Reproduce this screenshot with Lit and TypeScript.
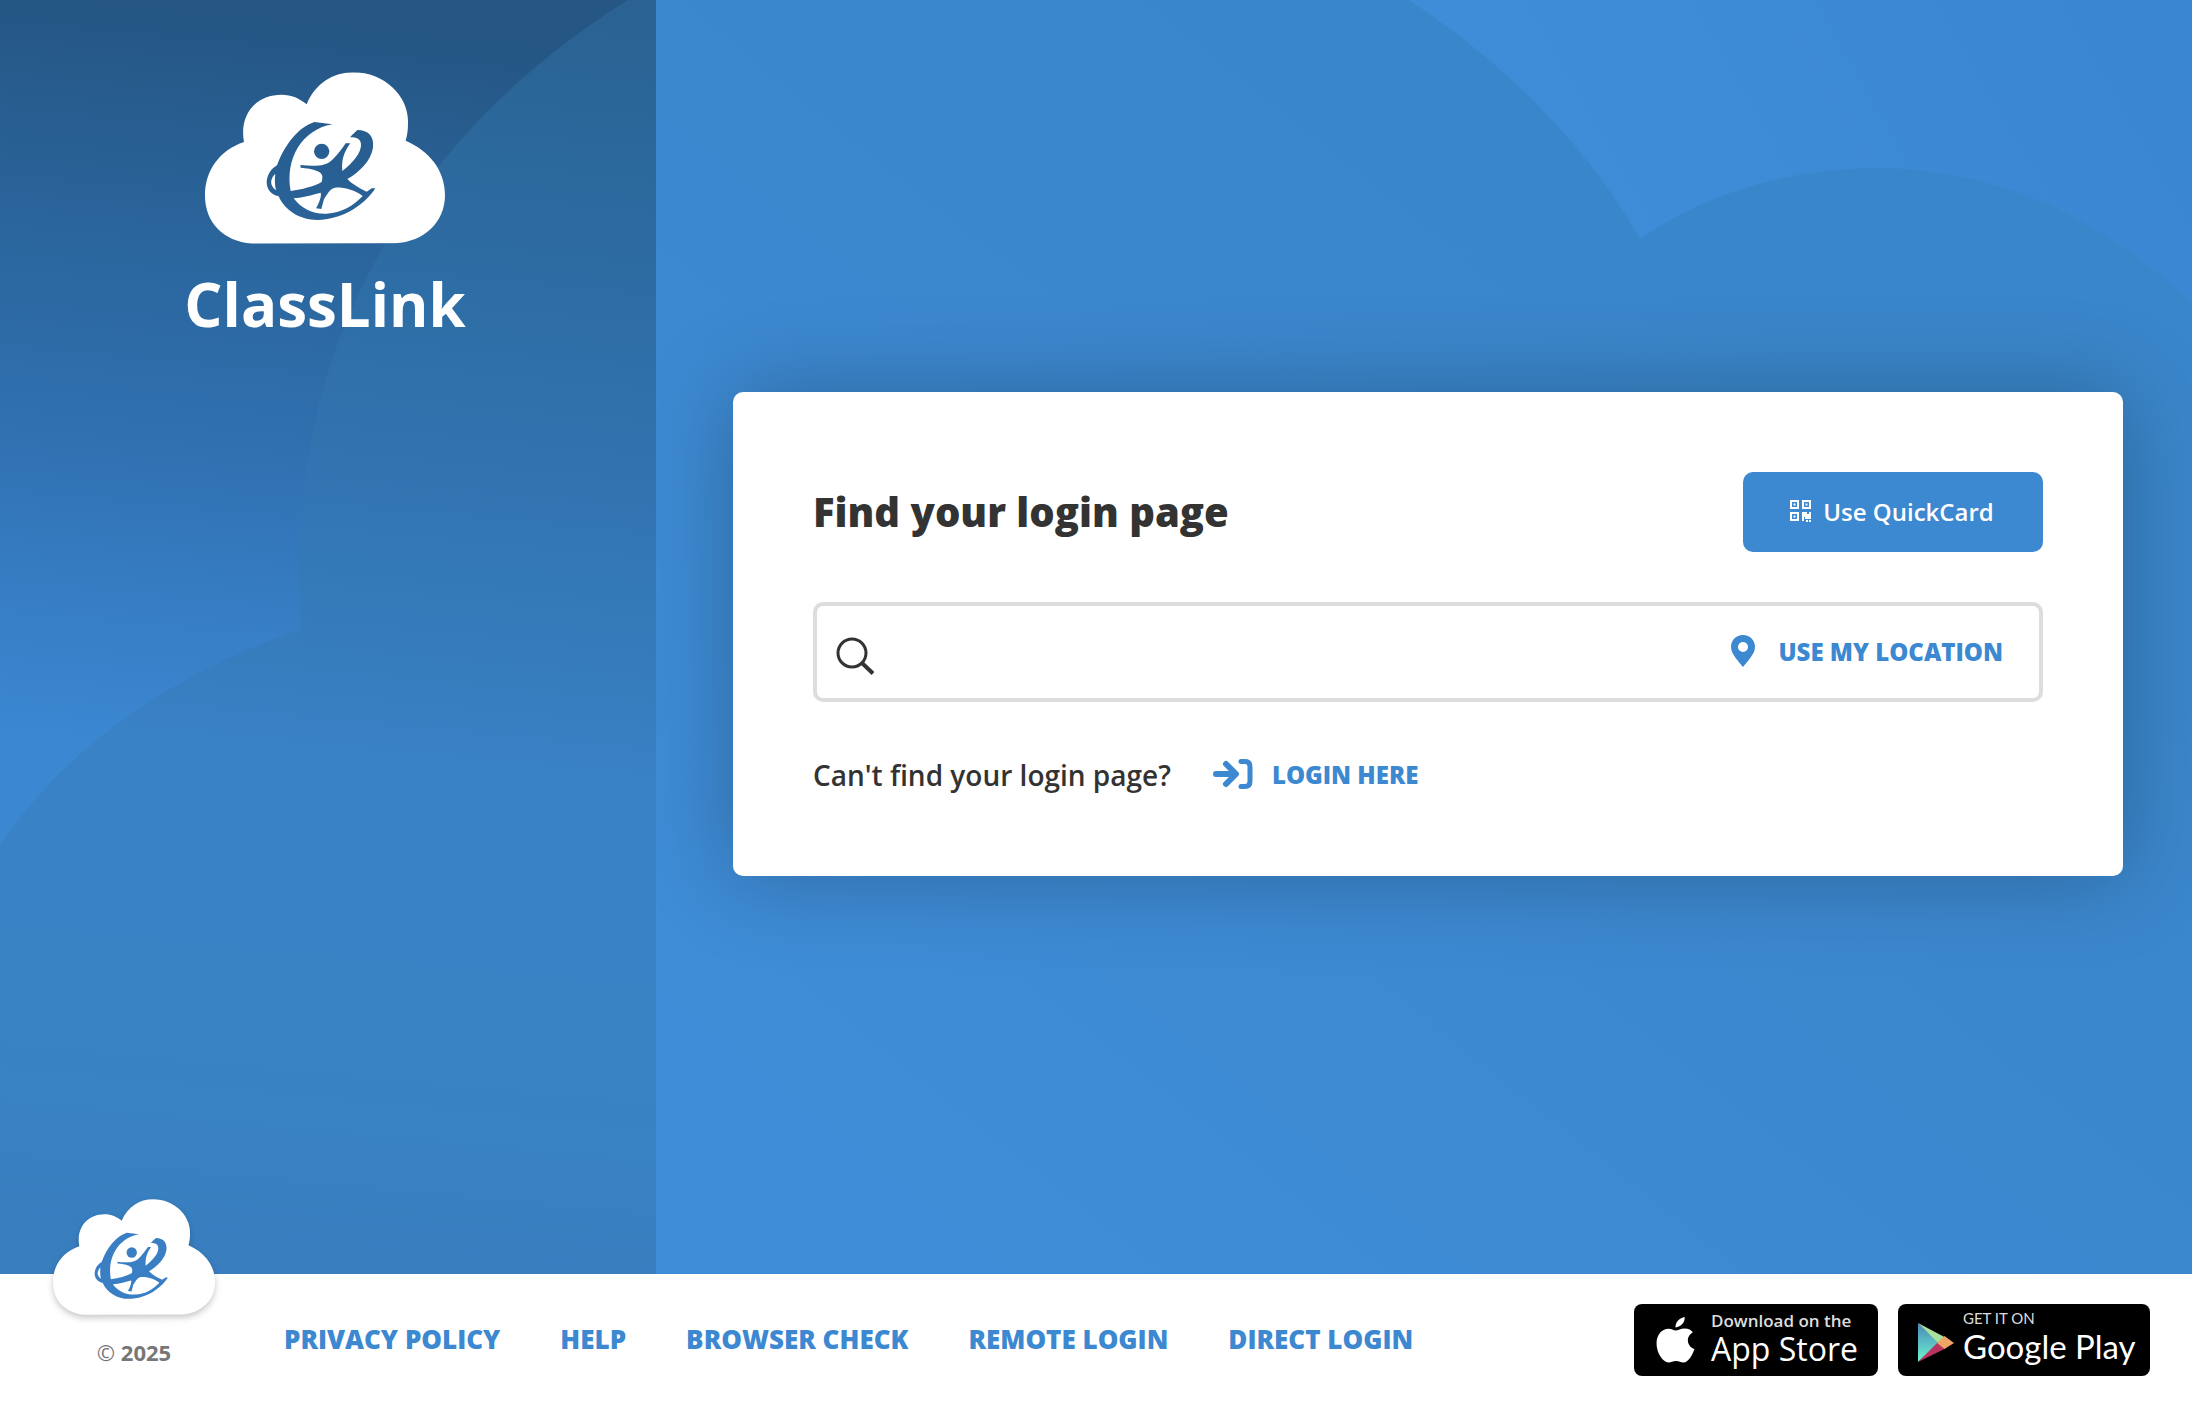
import { LitElement, html, css, svg } from "lit";
import { customElement } from "lit/decorators.js";

const cloudPath =
  "M140 514 C55 506 0 450 0 370 C0 290 48 232 117 209 C102 130 150 67 230 67 C259 67 284 78 305 96 C332 32 385 0 445 0 C540 0 612 74 609 151 C609 173 607 188 602 205 C672 235 720 293 720 368 C720 450 658 508 570 513 Z";

const figure = svg`
  <path fill-rule="evenodd" d="M328 149 L382 156 C290 172 240 260 257 356 C292 351 325 343 350 329 C356 308 350 302 336 296 C322 290 305 287 287 286 L286 278 C330 283 362 282 382 262 C400 246 410 230 422 213 L436 213 C416 240 409 265 412 296 C445 270 468 242 468 218 C468 200 455 195 435 195 L442 187 L457 173 C490 173 508 192 504 226 C498 265 465 298 427 320 C440 334 460 346 485 358 L500 348 L511 348 C485 390 420 442 337 443 C285 443 240 415 221 372 C196 366 185 350 185 328 C187 306 198 290 216 279 C240 215 280 165 328 149 Z M211 304 C195 320 193 338 213 354 C209 337 209 320 211 304 Z M266 378 C290 410 325 426 365 424 C410 422 445 400 473 371 C445 350 410 344 390 346 C372 350 365 370 357 380 L349 410 L333 408 C343 390 350 372 347 361 C325 367 295 375 266 378 Z"/>
  <circle cx="350" cy="237" r="23"/>`;

@customElement("app-root")
export class AppRoot extends LitElement {
  static styles = css`
    :host {
      display: grid;
      grid-template-rows: 1fr auto;
      min-height: 100vh;
      font-family: "Open Sans", "Noto Sans", sans-serif;
      color: #333;
      --blue: #3c88d1;
    }
    * { box-sizing: border-box; }
    a { color: var(--blue); text-decoration: none; }
    button { font: inherit; border: 0; background: none; cursor: pointer; }
    .main {
      position: relative;
      display: grid;
      grid-template-columns: clamp(320px, 30vw, 656px) 1fr;
      background: linear-gradient(60deg, #3f8dd9 72%, #3b86d2 98%);
      isolation: isolate;
    }
    .backdrop {
      position: absolute;
      inset: 0;
      width: 100%;
      height: 100%;
      z-index: -1;
    }
    .side {
      position: relative;
      display: flex;
      flex-direction: column;
      align-items: center;
      padding: 72px 6px 0 0;
      isolation: isolate;
    }
    .logo { display: block; width: 240px; height: 172px; }
    .brand { margin: 20px 0 0; font-size: 60px; line-height: 80px; font-weight: 700; color: #fff; }
    .content {
      display: flex;
      align-items: center;
      padding: 0 69px 6px 77px;
    }
    .card {
      flex: 1;
      display: flex;
      flex-direction: column;
      gap: 50px;
      padding: 80px;
      border-radius: 10px;
      background: #fff;
      box-shadow: 0 0 90px rgba(0, 0, 0, 0.25);
    }
    .head { display: flex; align-items: center; justify-content: space-between; }
    .title { margin: 0; font-size: 40px; line-height: 56px; font-weight: 800; }
    .quick {
      display: flex;
      align-items: center;
      justify-content: center;
      gap: 11px;
      width: 300px;
      height: 80px;
      padding: 0 8px 2px 6px;
      border-radius: 10px;
      background: var(--blue);
      color: #fff;
      font-size: 24px;
      font-weight: 600;
    }
    .search {
      display: flex;
      align-items: center;
      height: 100px;
      padding: 0 36px 0 19px;
      border: 4px solid #ddd;
      border-radius: 10px;
    }
    .lens { display: flex; padding-top: 10px; }
    .query {
      flex: 1;
      min-width: 0;
      height: 80px;
      padding: 0 16px;
      border: 0;
      outline: 0;
      font: 600 28px "Open Sans", sans-serif;
      color: #333;
      background: none;
    }
    .action {
      display: flex;
      align-items: center;
      padding: 0 0 2px;
      font-size: 24px;
      font-weight: 800;
      color: var(--blue);
    }
    .locate { gap: 22px; }
    .enter { gap: 18px; }
    .hint { display: flex; align-items: center; gap: 41px; height: 44px; padding-top: 2px; }
    .question { margin: 0; font-size: 28px; font-weight: 600; }
    .footer {
      position: relative;
      display: flex;
      align-items: center;
      height: 128px;
      padding: 0 42px 0 52px;
      background: #fff;
    }
    .mark {
      align-self: flex-end;
      display: flex;
      flex-direction: column;
      align-items: center;
      gap: 22px;
      width: 164px;
      padding-bottom: 35px;
    }
    .badge-cloud {
      width: 162px;
      height: 116px;
      overflow: visible;
      filter: drop-shadow(0 3px 3px rgba(0, 0, 0, 0.22));
    }
    .copy { font-size: 22px; line-height: 30px; font-weight: 700; color: #777; }
    .sign { font-weight: 400; }
    .nav { display: flex; gap: 60px; padding: 2px 0 0 68px; font-size: 26px; font-weight: 800; }
    .stores { display: flex; gap: 20px; margin-left: auto; padding-top: 4px; }
    .store {
      display: flex;
      align-items: center;
      height: 72px;
      border-radius: 8px;
      background: #000;
      color: #fff;
    }
    .apple { width: 244px; padding-left: 22px; gap: 16px; }
    .play { width: 252px; padding-left: 20px; gap: 9px; font-family: Lato, sans-serif; }
    .words { display: flex; flex-direction: column; white-space: nowrap; padding-bottom: 2px; }
    .play .words { padding-bottom: 8px; }
    .small { line-height: 20px; color: #ddd; }
    .apple .small { font-size: 17px; font-weight: 600; }
    .play .small { font-size: 15px; }
    .big { font-size: 32px; line-height: 36px; }
    .play .big { font-size: 33px; }
  `;

  private links = ["PRIVACY POLICY", "HELP", "BROWSER CHECK", "REMOTE LOGIN", "DIRECT LOGIN"];

  render() {
    return html`
      <main class="main">
        <svg class="backdrop" viewBox="0 0 2192 1274" preserveAspectRatio="none" aria-hidden="true">
          <defs>
            <linearGradient id="haze" gradientUnits="userSpaceOnUse" x1="700" y1="1100" x2="1500" y2="100">
              <stop offset="0" stop-color="#3f8dd8" />
              <stop offset="0.6" stop-color="#3c88cf" />
              <stop offset="1" stop-color="#3a86ca" />
            </linearGradient>
          </defs>
          <path
            fill="url(#haze)"
            d="M300 1274 L300 560 C300 330 420 130 628 0 C850 -140 1200 -140 1409 0 C1507 65 1587 145 1640 239 C1710 190 1795 168 1880 168 C2010 170 2110 225 2192 303 L2192 1274 Z"
          />
        </svg>
        <aside class="side">
          <svg class="backdrop" viewBox="0 0 656 1274" preserveAspectRatio="none" aria-hidden="true">
            <defs>
              <linearGradient id="sky" gradientUnits="userSpaceOnUse" x1="80" y1="0" x2="0" y2="850">
                <stop offset="0" stop-color="#255684" />
                <stop offset="0.3" stop-color="#2b679f" />
                <stop offset="0.5" stop-color="#3070b0" />
                <stop offset="0.72" stop-color="#377fc6" />
                <stop offset="0.86" stop-color="#3b87d1" />
                <stop offset="1" stop-color="#3b87d1" />
              </linearGradient>
              <linearGradient id="lobe" gradientUnits="userSpaceOnUse" x1="420" y1="0" x2="300" y2="1274">
                <stop offset="0" stop-color="#2a6393" />
                <stop offset="0.2" stop-color="#2d6ca3" />
                <stop offset="0.33" stop-color="#3172ae" />
                <stop offset="0.45" stop-color="#3479b7" />
                <stop offset="0.6" stop-color="#3982c6" />
                <stop offset="0.85" stop-color="#3882c4" />
                <stop offset="1" stop-color="#397ebf" />
              </linearGradient>
            </defs>
            <rect width="656" height="1274" fill="url(#sky)" />
            <path
              fill="url(#lobe)"
              d="M0 845 C60 755 165 675 300 630 L300 560 C300 330 420 130 628 0 L656 0 L656 1274 L0 1274 Z"
            />
          </svg>
          <svg class="logo" viewBox="0 0 720 514" aria-hidden="true">
            <mask id="cut">
              <rect width="720" height="514" fill="#fff" />
              <g fill="#000">${figure}</g>
            </mask>
            <path d=${cloudPath} fill="#fff" mask="url(#cut)" />
          </svg>
          <p class="brand">ClassLink</p>
        </aside>
        <section class="content">
          <div class="card">
            <div class="head">
              <h1 class="title">Find your login page</h1>
              <button class="quick" type="button">
                <svg width="22" height="22" viewBox="0 0 22 22" fill="none" stroke="#fff" stroke-width="2" aria-hidden="true">
                  <path d="M1 1h7v7H1zM13 1h7v7h-7zM1 13h7v7H1z" />
                  <path fill="#fff" stroke="none" d="M3.500 3.500h2v2h-2zM15.500 3.500h2v2h-2zM3.500 15.500h2v2h-2zM12 12h5v2h2v-2h2v7h-6v-2h-1v4h-2zM16 20h2v2h-2zM19 20h2v2h-2z" />
                </svg>
                <span>Use QuickCard</span>
              </button>
            </div>
            <div class="search">
              <label class="lens" for="query" aria-label="Search">
                <svg width="40" height="40" viewBox="0 0 40 40" fill="none" stroke="#333" stroke-width="3" aria-hidden="true">
                  <circle cx="16" cy="16" r="14" />
                  <path d="M26 26 L37 36.500" stroke-width="4" />
                </svg>
              </label>
              <input class="query" id="query" type="text" />
              <button class="action locate" type="button">
                <svg width="26" height="34" viewBox="0 0 26 34" fill="#3c88d1" aria-hidden="true">
                  <path fill-rule="evenodd" d="M13 1 C6 1 1 6 1 13 C1 20 9 28 13 33 C17 28 25 20 25 13 C25 6 20 1 13 1 Z M13 8 A5 5 0 1 1 13 18 A5 5 0 1 1 13 8 Z" />
                </svg>
                <span>USE MY LOCATION</span>
              </button>
            </div>
            <div class="hint">
              <p class="question">Can't find your login page?</p>
              <a class="action enter" href="#login">
                <svg width="42" height="32" viewBox="0 0 42 32" fill="none" stroke="#3c88d1" stroke-width="6" stroke-linecap="round" stroke-linejoin="round" aria-hidden="true">
                  <path d="M4 16 H23 M14 6 L24 16 L14 26" />
                  <path d="M29 3.500 H33 Q38 3.500 38 9 V23 Q38 28.500 33 28.500 H29" stroke-width="5" />
                </svg>
                <span>LOGIN HERE</span>
              </a>
            </div>
          </div>
        </section>
      </main>
      <footer class="footer">
        <div class="mark">
          <svg class="badge-cloud" viewBox="0 0 720 514" aria-hidden="true">
            <path d=${cloudPath} fill="#fff" />
            <g fill="#3a7fc4">${figure}</g>
          </svg>
          <span class="copy"><span class="sign">©</span> 2025</span>
        </div>
        <nav class="nav">${this.links.map((t) => html`<a href="#${t.toLowerCase().replace(" ", "-")}">${t}</a>`)}</nav>
        <div class="stores">
          <a class="store apple" href="#app-store">
            <svg width="39" height="46" viewBox="0 0 36 46" preserveAspectRatio="none" fill="#fff" aria-hidden="true">
              <path d="M26.500 0 C27 5 23 10 18 10.500 C17.500 5.500 22 0.500 26.500 0 Z" />
              <path d="M18 13.500 C20.500 13.500 22.500 11.500 26.500 11.500 C30 11.500 32.500 13 34 15.500 C27 19.500 28.500 29.500 35.500 32 C34 37 30 45.500 25.500 45.500 C22.500 45.500 21.500 44 18.500 44 C15.500 44 14 45.500 11.500 45.500 C6.500 45.500 0.500 36 0.500 26.500 C0.500 17 6 11.800 11.500 11.800 C14.500 11.800 16 13.500 18 13.500 Z" />
            </svg>
            <span class="words"><span class="small">Download on the</span><span class="big">App Store</span></span>
          </a>
          <a class="store play" href="#google-play">
            <svg width="36" height="46" viewBox="0 -6 34 46" preserveAspectRatio="none" aria-hidden="true">
              <defs>
                <linearGradient id="tri" x1="0" y1="0" x2="0" y2="1">
                  <stop offset="0" stop-color="#4a86b8" />
                  <stop offset="1" stop-color="#6df5cf" />
                </linearGradient>
              </defs>
              <path d="M0 0 L20 20 L0 39 Z" fill="url(#tri)" />
              <path d="M0 0 L25 14 L19 20 Z" fill="#a9e0a0" />
              <path d="M0 39 L25 26 L19 19 Z" fill="#b8345f" />
              <path d="M25 13 L34 20 L25 26 L18 20 Z" fill="#f0a566" />
            </svg>
            <span class="words"><span class="small">GET IT ON</span><span class="big">Google Play</span></span>
          </a>
        </div>
      </footer>
    `;
  }
}
